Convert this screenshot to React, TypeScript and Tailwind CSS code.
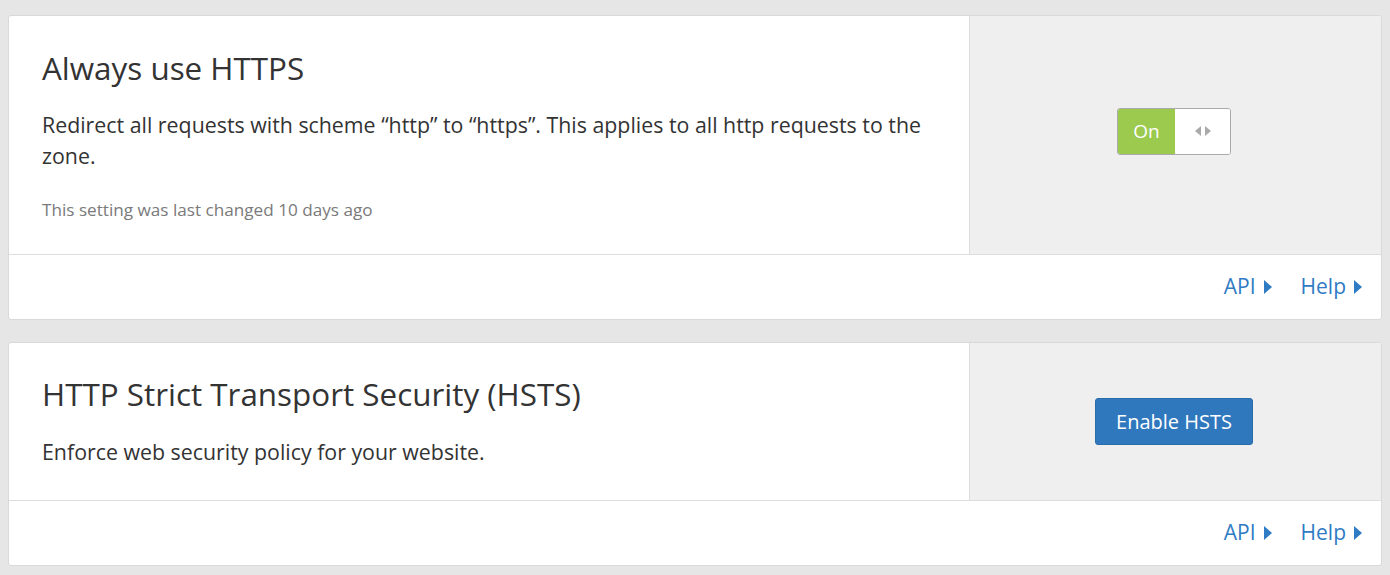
import React from "react";

const font = { fontFamily: '"Open Sans", "Noto Sans", sans-serif' };

function Tri() {
  return (
    <svg width="8" height="14" viewBox="0 0 8 14" className="inline-block ml-[8px]">
      <path d="M0 0 L8 7 L0 14 Z" fill="#2f7bc4" />
    </svg>
  );
}

function Footer() {
  return (
    <div className="h-[65px] border-t border-[#dedede] flex items-center justify-end pr-[19px] gap-[29px] text-[21px] text-[#2f7bc4]">
      <a className="flex items-center">API<Tri /></a>
      <a className="flex items-center">Help<Tri /></a>
    </div>
  );
}

export default function App() {
  return (
    <div className="min-h-[575px] bg-[#e6e6e6] pt-[15px] px-[8px] pb-[8px] flex flex-col gap-[22px]" style={font}>
      <div className="bg-white border border-[#d9d9d9] rounded-[3px] w-[1374px]">
        <div className="flex h-[238px]">
          <div className="flex-1 pl-[33px] pr-[30px] pt-[32px]">
            <h2 className="text-[31.4px] leading-[40px] text-[#333]">Always use HTTPS</h2>
            <p className="text-[21.35px] leading-[31px] text-[#333] mt-[21px]">
              Redirect all requests with scheme “http” to “https”. This applies to all http requests to the zone.
            </p>
            <p className="text-[17.15px] leading-[24px] text-[#7a7a7a] mt-[27px]">This setting was last changed 10 days ago</p>
          </div>
          <div className="w-[412px] bg-[#efefef] border-l border-[#dedede] flex items-center justify-center">
            <div className="flex h-[47px] mb-[8px] mr-[3px] border border-[#aaaaaa] rounded-[3px] overflow-hidden">
              <div className="w-[57px] bg-[#9bca4e] text-white text-[19px] flex items-center justify-center">On</div>
              <div className="w-[55px] bg-white flex items-center justify-center">
                <svg width="16" height="10" viewBox="0 0 16 10">
                  <path d="M6 0 L0 5 L6 10 Z" fill="#aaa" />
                  <path d="M10 0 L16 5 L10 10 Z" fill="#aaa" />
                </svg>
              </div>
            </div>
          </div>
        </div>
        <Footer />
      </div>
      <div className="bg-white border border-[#d9d9d9] rounded-[3px] w-[1374px]">
        <div className="flex h-[157px]">
          <div className="flex-1 pl-[33px] pr-[30px] pt-[31px]">
            <h2 className="text-[31.4px] leading-[40px] text-[#333]">HTTP Strict Transport Security (HSTS)</h2>
            <p className="text-[21.35px] leading-[31px] text-[#333] mt-[22px]">Enforce web security policy for your website.</p>
          </div>
          <div className="w-[412px] bg-[#efefef] border-l border-[#dedede] flex items-center justify-center">
            <button className="h-[47px] w-[158px] mr-[3px] bg-[#2f78bd] border border-[#2a6ca9] rounded-[3px] text-white text-[20px]">Enable HSTS</button>
          </div>
        </div>
        <Footer />
      </div>
    </div>
  );
}
